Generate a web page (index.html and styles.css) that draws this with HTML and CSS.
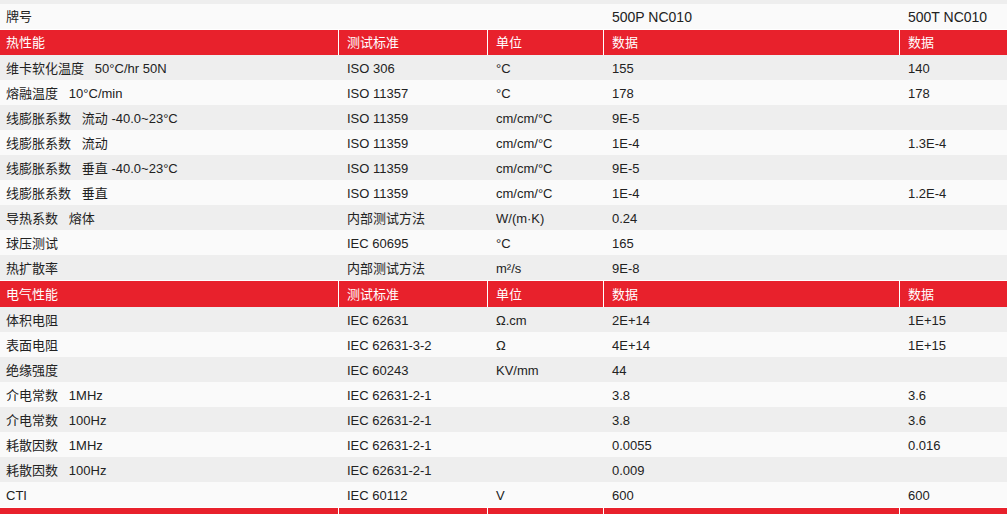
FILE: index.html
```html
<!DOCTYPE html>
<html lang="zh-CN">
<head>
<meta charset="utf-8">
<title>500P NC010 / 500T NC010</title>
<link rel="stylesheet" href="styles.css">
</head>
<body>
<div class="top-strip"></div>
<table class="spec">
  <colgroup>
    <col class="c1"><col class="c2"><col class="c3"><col class="c4"><col class="c5">
  </colgroup>
  <tbody>
    <tr class="brand">
      <td>牌号</td><td></td><td></td><td>500P NC010</td><td>500T NC010</td>
    </tr>
    <tr class="head">
      <th>热性能</th><th>测试标准</th><th>单位</th><th>数据</th><th>数据</th>
    </tr>
    <tr class="odd"><td>维卡软化温度&nbsp;&nbsp;&nbsp;50°C/hr 50N</td><td>ISO 306</td><td>°C</td><td>155</td><td>140</td></tr>
    <tr class="even"><td>熔融温度&nbsp;&nbsp;&nbsp;10°C/min</td><td>ISO 11357</td><td>°C</td><td>178</td><td>178</td></tr>
    <tr class="odd"><td>线膨胀系数&nbsp;&nbsp;&nbsp;流动 -40.0~23°C</td><td>ISO 11359</td><td>cm/cm/°C</td><td>9E-5</td><td></td></tr>
    <tr class="even"><td>线膨胀系数&nbsp;&nbsp;&nbsp;流动</td><td>ISO 11359</td><td>cm/cm/°C</td><td>1E-4</td><td>1.3E-4</td></tr>
    <tr class="odd"><td>线膨胀系数&nbsp;&nbsp;&nbsp;垂直 -40.0~23°C</td><td>ISO 11359</td><td>cm/cm/°C</td><td>9E-5</td><td></td></tr>
    <tr class="even"><td>线膨胀系数&nbsp;&nbsp;&nbsp;垂直</td><td>ISO 11359</td><td>cm/cm/°C</td><td>1E-4</td><td>1.2E-4</td></tr>
    <tr class="odd"><td>导热系数&nbsp;&nbsp;&nbsp;熔体</td><td>内部测试方法</td><td>W/(m·K)</td><td>0.24</td><td></td></tr>
    <tr class="even"><td>球压测试</td><td>IEC 60695</td><td>°C</td><td>165</td><td></td></tr>
    <tr class="odd"><td>热扩散率</td><td>内部测试方法</td><td>m²/s</td><td>9E-8</td><td></td></tr>
    <tr class="head head-tall">
      <th>电气性能</th><th>测试标准</th><th>单位</th><th>数据</th><th>数据</th>
    </tr>
    <tr class="odd"><td>体积电阻</td><td>IEC 62631</td><td>Ω.cm</td><td>2E+14</td><td>1E+15</td></tr>
    <tr class="even"><td>表面电阻</td><td>IEC 62631-3-2</td><td>Ω</td><td>4E+14</td><td>1E+15</td></tr>
    <tr class="odd"><td>绝缘强度</td><td>IEC 60243</td><td>KV/mm</td><td>44</td><td></td></tr>
    <tr class="even"><td>介电常数&nbsp;&nbsp;&nbsp;1MHz</td><td>IEC 62631-2-1</td><td></td><td>3.8</td><td>3.6</td></tr>
    <tr class="odd"><td>介电常数&nbsp;&nbsp;&nbsp;100Hz</td><td>IEC 62631-2-1</td><td></td><td>3.8</td><td>3.6</td></tr>
    <tr class="even"><td>耗散因数&nbsp;&nbsp;&nbsp;1MHz</td><td>IEC 62631-2-1</td><td></td><td>0.0055</td><td>0.016</td></tr>
    <tr class="odd"><td>耗散因数&nbsp;&nbsp;&nbsp;100Hz</td><td>IEC 62631-2-1</td><td></td><td>0.009</td><td></td></tr>
    <tr class="even"><td>CTI</td><td>IEC 60112</td><td>V</td><td>600</td><td>600</td></tr>
    <tr class="head">
      <th></th><th></th><th></th><th></th><th></th>
    </tr>
  </tbody>
</table>
</body>
</html>
```

FILE: styles.css
```css
html, body {
  margin: 0;
  padding: 0;
  background: #ffffff;
}

body {
  font-family: "Liberation Sans", "Noto Sans CJK SC", Arial, sans-serif;
  font-size: 13px;
  color: #222222;
  overflow: hidden;
}

.top-strip {
  height: 4px;
  background: #eeeeee;
}

.spec {
  width: 1007px;
  table-layout: fixed;
  border-collapse: separate;
  border-spacing: 0;
}

.spec .c1 { width: 339px; }
.spec .c2 { width: 149px; }
.spec .c3 { width: 116px; }
.spec .c4 { width: 296px; }
.spec .c5 { width: 107px; }

.spec td,
.spec th {
  height: 25px;
  padding: 0 0 0 8px;
  text-align: left;
  vertical-align: middle;
  white-space: nowrap;
  overflow: hidden;
  box-sizing: border-box;
  line-height: 16px;
}

.spec td:first-child,
.spec th:first-child {
  padding-left: 6px;
}

.odd td,
.even td {
  padding-top: 2px;
}

.brand td {
  background: #fafafa;
  font-size: 13px;
}

.brand td:nth-child(4),
.brand td:nth-child(5) {
  font-size: 14px;
}

.odd td {
  background: #eeeeee;
}

.even td {
  background: #fafafa;
}

.head th {
  height: 26px;
  background: #e8212c;
  color: #ffffff;
  font-weight: normal;
  border-top: 1px solid #ffffff;
  border-right: 1px solid #ffffff;
}

.head-tall th {
  height: 27px;
  padding-top: 1px;
}

.head th:last-child {
  border-right: 0;
}
```
